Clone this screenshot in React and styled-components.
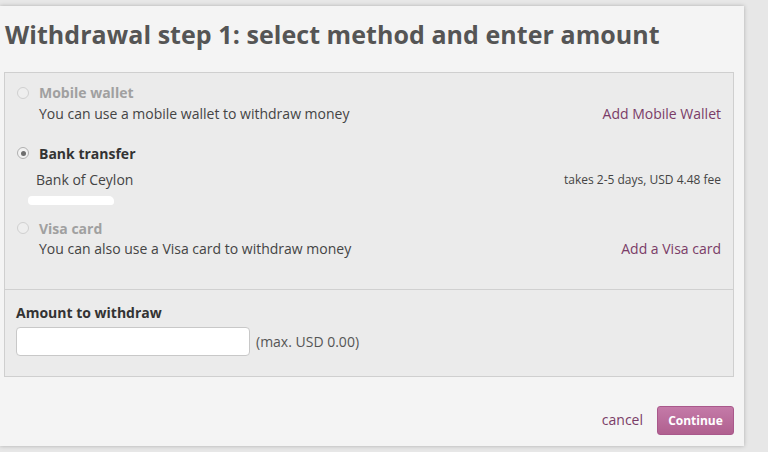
import React from "react";
import styled, { createGlobalStyle } from "styled-components";

const Global = createGlobalStyle`
  html, body { margin: 0; padding: 0; }
  body {
    background: #e7e7e7;
    font-family: "Open Sans", "Liberation Sans", sans-serif;
    width: 768px;
    height: 452px;
    overflow: hidden;
  }
`;

const Modal = styled.div`
  margin-top: 6px;
  width: 744px;
  height: 440px;
  background: #f4f4f4;
  box-shadow: 0 0 4px rgba(0,0,0,0.25);
  box-sizing: border-box;
  padding: 0 10px 0 4px;
  display: flex;
  flex-direction: column;
`;

const Title = styled.h1`
  margin: 0;
  padding: 11px 0 0 1px;
  height: 66px;
  box-sizing: border-box;
  font-size: 25px;
  font-weight: 700;
  color: #555;
  letter-spacing: 0.06px;
`;

const Panel = styled.div`
  background: #ebebeb;
  border: 1px solid #cfcfcf;
  height: 305px;
  box-sizing: border-box;
  display: flex;
  flex-direction: column;
`;

const Methods = styled.div`
  padding: 8px 12px 0 10px;
  height: 217px;
  box-sizing: border-box;
  border-bottom: 1px solid #d0d0d0;
`;

const Method = styled.div`
  display: grid;
  grid-template-columns: 24px 1fr auto;
  align-items: center;
  height: ${p => p.h}px;
`;

const Radio = styled.span`
  width: 12px;
  height: 12px;
  border-radius: 50%;
  border: 1px solid ${p => (p.checked ? "#b0b0b0" : "#d0d0d0")};
  background: ${p => (p.checked ? "#f2f2f2" : "#eeeeee")};
  box-sizing: border-box;
  display: flex;
  align-items: center;
  justify-content: center;
  margin-left: 2px;
  &::after {
    content: "";
    display: ${p => (p.checked ? "block" : "none")};
    width: 5px;
    height: 5px;
    border-radius: 50%;
    background: #6e6e6e;
  }
`;

const Label = styled.span`
  font-size: 14px;
  font-weight: 700;
  color: ${p => (p.disabled ? "#a0a0a0" : "#333")};
`;

const Desc = styled.span`
  grid-column: 2;
  font-size: 14px;
  color: #444;
`;

const Link = styled.a`
  font-size: 14px;
  color: #7a3c67;
  text-decoration: none;
  justify-self: end;
`;

const Bank = styled.span`
  grid-column: 1 / 3;
  padding-left: 21px;
  font-size: 14px;
  color: #444;
`;

const Fee = styled.span`
  font-size: 12px;
  color: #444;
  justify-self: end;
`;

const Redact = styled.span`
  display: block;
  margin: 0 0 0 13px;
  width: 86px;
  height: 9px;
  background: #fff;
  border-radius: 4px 5px 3px 4px;
`;

const Amount = styled.div`
  padding: 13px 0 0 11px;
  display: flex;
  flex-direction: column;
  gap: 5px;
`;

const AmountLabel = styled.label`
  font-size: 14px;
  font-weight: 700;
  color: #333;
`;

const Row = styled.div`
  display: flex;
  align-items: center;
  gap: 6px;
`;

const Input = styled.input`
  width: 234px;
  height: 29px;
  box-sizing: border-box;
  border: 1px solid #c8c8c8;
  border-radius: 4px;
  background: #fff;
  outline: none;
`;

const Max = styled.span`
  font-size: 14px;
  color: #555;
`;

const Footer = styled.div`
  flex: 1;
  display: flex;
  justify-content: flex-end;
  align-items: flex-end;
  gap: 14px;
  padding-bottom: 11px;
`;

const Cancel = styled.a`
  font-size: 14px;
  color: #7a3c67;
  text-decoration: none;
  margin-bottom: 6px;
`;

const Button = styled.button`
  width: 77px;
  height: 29px;
  border: 1px solid #a9588b;
  border-radius: 3px;
  background: linear-gradient(#c47aa8, #b0608f);
  color: #fff;
  font-family: "Open Sans", "Liberation Sans", sans-serif;
  font-weight: 700;
  font-size: 12px;
  padding: 0;
`;

export default function App() {
  return (
    <>
      <Global />
      <Modal>
        <Title>Withdrawal step 1: select method and enter amount</Title>
        <Panel>
          <Methods>
            <Method h={23}>
              <Radio />
              <Label disabled>Mobile wallet</Label>
            </Method>
            <Method h={16}>
              <Desc>You can use a mobile wallet to withdraw money</Desc>
              <Link href="#">Add Mobile Wallet</Link>
            </Method>
            <Method h={22} />
            <Method h={22}>
              <Radio checked />
              <Label>Bank transfer</Label>
            </Method>
            <Method h={30}>
              <Bank>Bank of Ceylon</Bank>
              <Fee>takes 2-5 days, USD 4.48 fee</Fee>
            </Method>
            <Method h={12}>
              <Redact />
            </Method>
            <Method h={11} />
            <Method h={22}>
              <Radio />
              <Label disabled>Visa card</Label>
            </Method>
            <Method h={18}>
              <Desc>You can also use a Visa card to withdraw money</Desc>
              <Link href="#">Add a Visa card</Link>
            </Method>
          </Methods>
          <Amount>
            <AmountLabel>Amount to withdraw</AmountLabel>
            <Row>
              <Input />
              <Max>(max. USD 0.00)</Max>
            </Row>
          </Amount>
        </Panel>
        <Footer>
          <Cancel href="#">cancel</Cancel>
          <Button>Continue</Button>
        </Footer>
      </Modal>
    </>
  );
}
